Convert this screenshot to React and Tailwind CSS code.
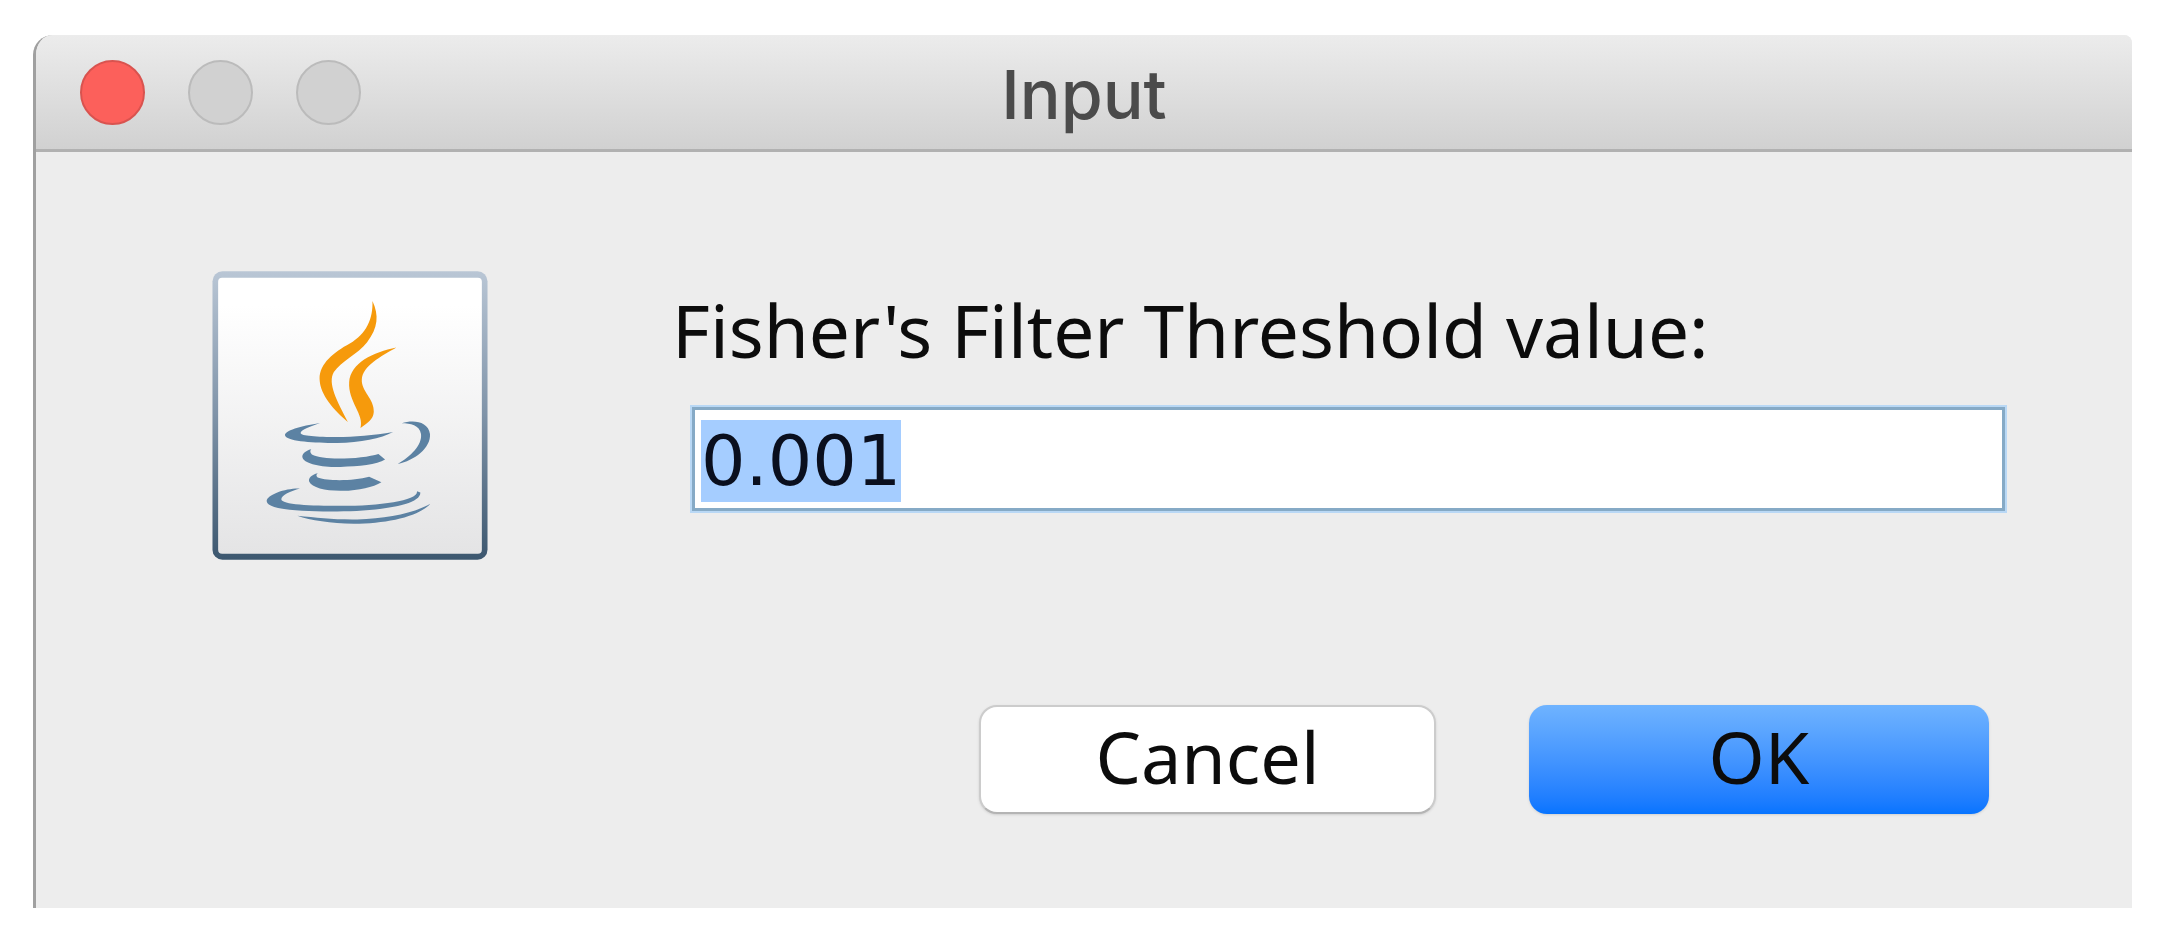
import { useEffect, useRef, useState } from 'react'

function JavaIcon() {
  return (
    <svg viewBox="64 62 829 869" className="w-[276px] h-[289px] shrink-0" aria-hidden="true">
      <defs>
        <linearGradient id="frame" x1="0" y1="0" x2="0" y2="1">
          <stop offset="0" stopColor="#b9c6d5" />
          <stop offset="0.5" stopColor="#7f93a8" />
          <stop offset="1" stopColor="#3c576f" />
        </linearGradient>
        <linearGradient id="face" x1="0" y1="0" x2="0" y2="1">
          <stop offset="0.1" stopColor="#ffffff" />
          <stop offset="1" stopColor="#e4e4e5" />
        </linearGradient>
      </defs>
      <rect x="65" y="63" width="827" height="867" rx="30" fill="url(#frame)" />
      <rect x="82" y="82" width="793" height="830" rx="12" fill="url(#face)" />
      {/* Steam */}
      <g fill="#f69a0c">
        <path d="M546 152C566 196 563 232 530 276C502 312 452 332 430 366C410 400 440 454 472 516C432 482 388 436 387 386C387 340 430 306 478 280C528 250 548 206 546 152Z" />
        <path d="M618 292C572 318 516 348 514 388C512 424 552 446 550 486C549 508 530 520 510 534C522 494 472 454 476 396C480 338 548 306 618 292Z" />
      </g>
      {/* Cup and saucer */}
      <g fill="#5c82a3">
        <path d="M388 520C350 524 282 540 283 556C286 574 370 580 440 579C510 578 572 566 608 546C550 556 490 561 440 561C380 561 330 558 330 549C330 540 362 528 388 520Z" />
        <path d="M634 520C668 508 714 514 719 552C722 594 672 632 622 642C660 620 696 586 692 552C688 526 660 520 634 520Z" />
        <path d="M362 598C344 602 332 614 336 624C346 644 396 652 450 651C504 650 560 644 584 629L564 612C520 626 400 634 364 614C358 608 358 602 362 598Z" />
        <path d="M382 670C362 674 352 686 356 696C364 714 406 724 456 723C506 722 548 712 573 697L536 681C490 694 410 694 384 684C376 680 376 674 382 670Z" />
        <path d="M328 716C288 714 228 734 228 754C230 780 340 786 440 785C560 784 692 768 690 728L680 724C684 752 570 768 450 768C360 768 272 764 272 748C272 736 300 724 328 716Z" />
        <path d="M720 762C686 800 590 822 490 822C420 821 360 812 320 798C380 804 430 810 500 809C590 807 670 790 720 762Z" />
      </g>
    </svg>
  )
}

function TitleBar({ title }) {
  return (
    <header className="grid grid-cols-[1fr_auto_1fr] items-center h-[117px] px-11 bg-linear-to-b from-[#ececec] to-[#d1d1d1] border-b-3 border-[#b1b1b1]">
      <div className="flex gap-[43px]">
        <button type="button" aria-label="Close" className="size-[65px] rounded-full bg-[#fc605b] border-2 border-[#d9534f]" />
        <button type="button" aria-label="Minimize" disabled className="size-[65px] rounded-full bg-[#d1d1d1] border-2 border-[#bbbbbb]" />
        <button type="button" aria-label="Zoom" disabled className="size-[65px] rounded-full bg-[#d1d1d1] border-2 border-[#bbbbbb]" />
      </div>
      <h1 className="font-['Inter',sans-serif] text-[68px] font-medium leading-none pt-1 text-[#4b4b4b]">{title}</h1>
    </header>
  )
}

export default function App() {
  const [value, setValue] = useState('0.001')
  const inputRef = useRef(null)

  // Open with the default value selected, ready to be typed over
  useEffect(() => {
    inputRef.current.focus()
    inputRef.current.select()
  }, [])

  return (
    <div className="bg-white pl-[33px] pr-8 pt-[35px] pb-[38px]">
      <main className="bg-[#ededed] border-l-3 border-[#a0a0a0] rounded-tl-[20px] rounded-tr-[8px] overflow-hidden font-['Noto_Sans','Open_Sans',sans-serif] text-[72px] text-[#0c0c0c]">
        <TitleBar title="Input" />

        <form onSubmit={e => e.preventDefault()} className="pl-44 pr-[127px] pt-[119px] pb-[94px]">
          <div className="flex items-start gap-[184px]">
            <JavaIcon />
            <div className="flex-1 min-w-0">
              <label htmlFor="threshold" className="block text-[73px] leading-[118px] whitespace-nowrap">Fisher's Filter Threshold value:</label>
              <div className="pl-5 pt-[18px]">
                <input
                  id="threshold"
                  ref={inputRef}
                  type="text"
                  value={value}
                  onChange={e => setValue(e.target.value)}
                  className="block w-full h-[104px] px-[6px] pt-1 font-['DejaVu_Sans',sans-serif] text-[70px] leading-[84px] bg-white border-3 border-[#86aac6] outline-2 outline-[#b9d8f5] selection:bg-[#a5cdff] selection:text-[#0a0f1e]"
                />
              </div>
            </div>
          </div>

          <div className="flex justify-end gap-[93px] pt-[145px] pr-4">
            <button type="button" className="w-[457px] h-[109px] pb-2 rounded-[18px] bg-white border-2 border-[#cccccc] border-b-[#b4b4b4] shadow-sm leading-none">Cancel</button>
            <button type="submit" className="w-[460px] h-[109px] pb-2 rounded-[18px] bg-linear-to-b from-[#6fb3ff] to-[#0674ff] shadow-sm leading-none">OK</button>
          </div>
        </form>
      </main>
    </div>
  )
}
